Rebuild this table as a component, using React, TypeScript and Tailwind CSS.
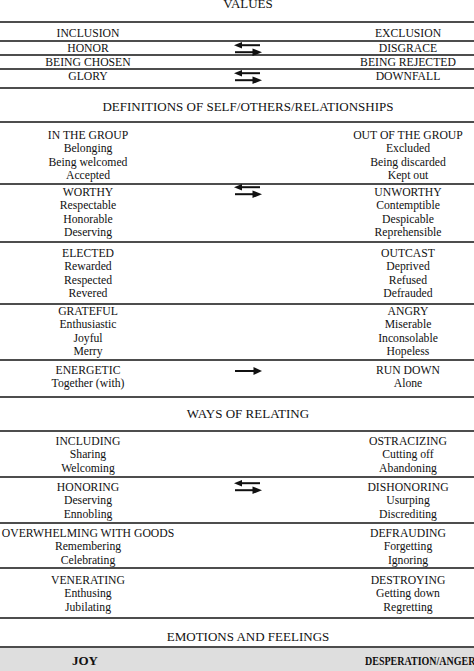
type Row = {
  left: string[]
  right: string[]
  arrow?: "double" | "single"
  arrowCls?: string
  cls: string
}

const values: Row[] = [
  { left: ["INCLUSION"], right: ["EXCLUSION"], cls: "h-[19px] pt-[4px]" },
  { left: ["HONOR"], right: ["DISGRACE"], arrow: "double", arrowCls: "mt-0", cls: "h-[14px]" },
  { left: ["BEING CHOSEN"], right: ["BEING REJECTED"], cls: "h-[14px]" },
  { left: ["GLORY"], right: ["DOWNFALL"], arrow: "double", arrowCls: "mt-0", cls: "h-[19px]" },
]

const definitions: Row[] = [
  {
    left: ["IN THE GROUP", "Belonging", "Being welcomed", "Accepted"],
    right: ["OUT OF THE GROUP", "Excluded", "Being discarded", "Kept out"],
    cls: "h-[62px] pt-[6px]",
  },
  {
    left: ["WORTHY", "Respectable", "Honorable", "Deserving"],
    right: ["UNWORTHY", "Contemptible", "Despicable", "Reprehensible"],
    arrow: "double",
    arrowCls: "-mt-[2px]",
    cls: "h-[58px] pt-px",
  },
  {
    left: ["ELECTED", "Rewarded", "Respected", "Revered"],
    right: ["OUTCAST", "Deprived", "Refused", "Defrauded"],
    cls: "h-[62px] pt-[4px]",
  },
  {
    left: ["GRATEFUL", "Enthusiastic", "Joyful", "Merry"],
    right: ["ANGRY", "Miserable", "Inconsolable", "Hopeless"],
    cls: "h-[56px]",
  },
  {
    left: ["ENERGETIC", "Together (with)"],
    right: ["RUN DOWN", "Alone"],
    arrow: "single",
    arrowCls: "mt-[2px]",
    cls: "h-[37px] pt-[3px]",
  },
]

const relating: Row[] = [
  {
    left: ["INCLUDING", "Sharing", "Welcoming"],
    right: ["OSTRACIZING", "Cutting off", "Abandoning"],
    cls: "h-[46px] pt-[3px]",
  },
  {
    left: ["HONORING", "Deserving", "Ennobling"],
    right: ["DISHONORING", "Usurping", "Discrediting"],
    arrow: "double",
    arrowCls: "-mt-px",
    cls: "h-[46px] pt-[3px]",
  },
  {
    left: ["OVERWHELMING WITH GOODS", "Remembering", "Celebrating"],
    right: ["DEFRAUDING", "Forgetting", "Ignoring"],
    cls: "h-[45px] pt-[3px]",
  },
  {
    left: ["VENERATING", "Enthusing", "Jubilating"],
    right: ["DESTROYING", "Getting down", "Regretting"],
    cls: "h-[50px] pt-[5px]",
  },
]

function DoubleArrow({ className }: { className?: string }) {
  return (
    <svg width="28" height="14" viewBox="0 0 28 14" className={className}>
      <line x1="5" y1="3.2" x2="26" y2="3.2" stroke="#111" strokeWidth="2" />
      <polygon points="0,3.2 8,0 8,6.4" fill="#111" />
      <line x1="1" y1="10.2" x2="20" y2="10.2" stroke="#111" strokeWidth="2" />
      <polygon points="28,10.2 18.5,6.4 18.5,14" fill="#111" />
    </svg>
  )
}

function SingleArrow({ className }: { className?: string }) {
  return (
    <svg width="28" height="10" viewBox="0 0 28 10" className={className}>
      <line x1="1" y1="5" x2="21" y2="5" stroke="#111" strokeWidth="2" />
      <polygon points="28,5 19.5,1 19.5,9" fill="#111" />
    </svg>
  )
}

function Cell({ lines }: { lines: string[] }) {
  return (
    <div className="flex flex-col items-center whitespace-nowrap">
      {lines.map((l) => (
        <div key={l} className="leading-[13.4px]">
          {l}
        </div>
      ))}
    </div>
  )
}

function PairRow({ row }: { row: Row }) {
  return (
    <div className={`border-b-2 border-[#4d4d4d] ${row.cls}`}>
      <div className="ml-2 grid w-[480px] grid-cols-3">
        <Cell lines={row.left} />
        <div className="flex justify-center">
          {row.arrow === "double" && <DoubleArrow className={row.arrowCls} />}
          {row.arrow === "single" && <SingleArrow className={row.arrowCls} />}
        </div>
        <Cell lines={row.right} />
      </div>
    </div>
  )
}

function Section({ title, cls }: { title: string; cls: string }) {
  return (
    <div className={`border-b-2 border-[#4d4d4d] ${cls}`}>
      <div className="ml-2 w-[480px] whitespace-nowrap text-center text-[13px] leading-[15px]">{title}</div>
    </div>
  )
}

export default function App() {
  return (
    <div
      className="w-[474px] h-[671px] overflow-hidden bg-white text-[11.7px] text-[#111]"
      style={{ fontFamily: '"Liberation Serif", "Times New Roman", serif' }}
    >
      <div className="h-[23px] overflow-hidden border-b-2 border-[#4d4d4d]">
        <div className="ml-2 -mt-[5px] w-[480px] text-center text-[13px] leading-[18px]">VALUES</div>
      </div>
      {values.map((r) => (
        <PairRow key={r.left[0]} row={r} />
      ))}

      <Section title="DEFINITIONS OF SELF/OTHERS/RELATIONSHIPS" cls="h-[34px] pt-[10px]" />
      {definitions.map((r) => (
        <PairRow key={r.left[0]} row={r} />
      ))}

      <Section title="WAYS OF RELATING" cls="h-[34px] pt-[8px]" />
      {relating.map((r) => (
        <PairRow key={r.left[0]} row={r} />
      ))}

      <Section title="EMOTIONS AND FEELINGS" cls="h-[29px] pt-[10px]" />
      <div className="flex h-[30px] bg-[#dedede] pt-[5px] text-[13px] font-bold leading-[15px] whitespace-nowrap">
        <div className="w-[365px] shrink-0 pl-[72px]">JOY</div>
        <div className="shrink-0 origin-left scale-x-[0.77]">DESPERATION/ANGER</div>
      </div>
    </div>
  )
}
